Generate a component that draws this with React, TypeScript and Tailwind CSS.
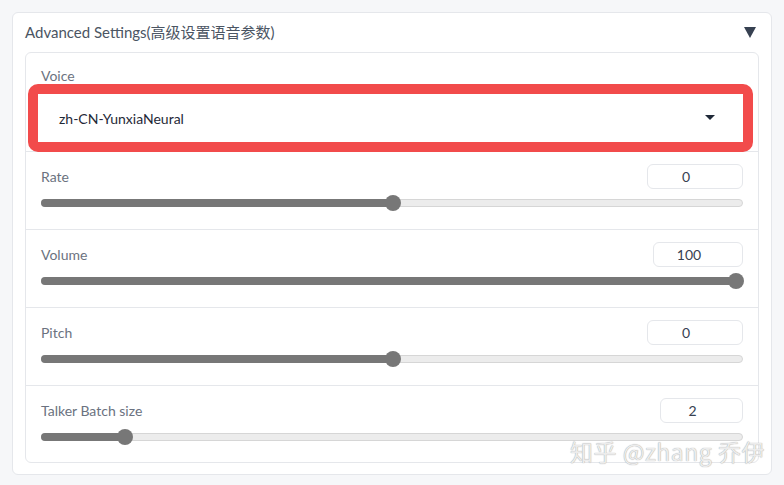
import React from 'react';

type SliderRow = {
  label: string;
  value: string;
  ratio: number;
  boxWidth: string;
};

const rows: SliderRow[] = [
  { label: 'Rate', value: '0', ratio: 0.5, boxWidth: 'w-[96px]' },
  { label: 'Volume', value: '100', ratio: 1, boxWidth: 'w-[90px]' },
  { label: 'Pitch', value: '0', ratio: 0.5, boxWidth: 'w-[96px]' },
  { label: 'Talker Batch size', value: '2', ratio: 1 / 9, boxWidth: 'w-[83px]' },
];

// Gradio-style range slider: filled part, empty part and a round thumb
const Slider = ({ ratio }: { ratio: number }) => {
  const thumbLeft = 8 + ratio * 687;
  return (
    <div className="relative h-[16px] flex items-center">
      <div className="w-full h-[8px] rounded-full bg-[#ececec] border border-[#d6d6d6]" />
      <div
        className="absolute left-0 h-[8px] rounded-full bg-[#777777]"
        style={{ width: `${thumbLeft}px` }}
      />
      <div
        className="absolute top-0 w-[16px] h-[16px] rounded-full bg-[#777777]"
        style={{ left: `${thumbLeft - 8}px` }}
      />
    </div>
  );
};

const Row = ({ row, last }: { row: SliderRow; last: boolean }) => (
  <div className={`px-[15px] pt-[12px] ${last ? 'pb-[17px]' : 'pb-[18px] border-b border-[#e5e7eb]'}`}>
    <div className="flex items-center justify-between h-[25px]">
      <span className="text-[14px] text-[#6b7280]">{row.label}</span>
      <div
        className={`${row.boxWidth} h-[25px] rounded-md border border-[#e5e7eb] flex items-center justify-center pr-[18px] text-[14px] text-[#374151]`}
      >
        {row.value}
      </div>
    </div>
    <div className="mt-[6px]">
      <Slider ratio={row.ratio} />
    </div>
  </div>
);

const App: React.FC = () => {
  return (
    <div
      className="relative w-[784px] h-[485px] bg-[#f6f7f9] p-[12px] overflow-hidden"
      style={{ fontFamily: 'Lato, "Noto Sans CJK SC", sans-serif' }}
    >
      <div className="h-[463px] bg-white border border-[#e5e7eb] rounded-md px-[12px] pb-[11px] flex flex-col">
        {/* Accordion header */}
        <div className="h-[41px] flex items-center justify-between">
          <span className="text-[15px] text-[#4b5563]">Advanced Settings(高级设置语音参数)</span>
          <svg width="12" height="11" viewBox="0 0 12 11" className="mr-[3px]">
            <polygon points="0,0 12,0 6,11" fill="#374151" />
          </svg>
        </div>

        {/* Inner panel */}
        <div className="relative flex-1 border border-[#e5e7eb] rounded-md">
          <div className="px-[15px] pt-[11px] pb-[11px] border-b border-[#e5e7eb]">
            <div className="h-[22px] flex items-center text-[14px] text-[#6b7280]">Voice</div>
            <div className="mt-[10px] h-[44px] rounded-md bg-white flex items-center justify-between pl-[18px] pr-[28px]">
              <span className="text-[14px] text-[#1f2937]">zh-CN-YunxiaNeural</span>
              <svg width="10" height="6" viewBox="0 0 10 6">
                <polygon points="0,0 10,0 5,5" fill="#1f2937" />
              </svg>
            </div>
          </div>
          {rows.map((row, i) => (
            <Row key={row.label} row={row} last={i === rows.length - 1} />
          ))}

          {/* red annotation box around the voice dropdown */}
          <div className="absolute left-[2px] top-[31px] w-[725px] h-[68px] border-[10px] border-[#f24b4b] rounded-[10px]" />
        </div>
      </div>

      {/* watermark */}
      <div
        className="absolute left-[570px] top-[434px] text-[23px] text-[#ececec] tracking-[0.5px] [text-shadow:0_0_1px_#8f8f8f]"
        style={{ fontFamily: '"Noto Sans CJK SC", sans-serif' }}
      >
        知乎 @zhang 乔伊
      </div>
    </div>
  );
};

export default App;
